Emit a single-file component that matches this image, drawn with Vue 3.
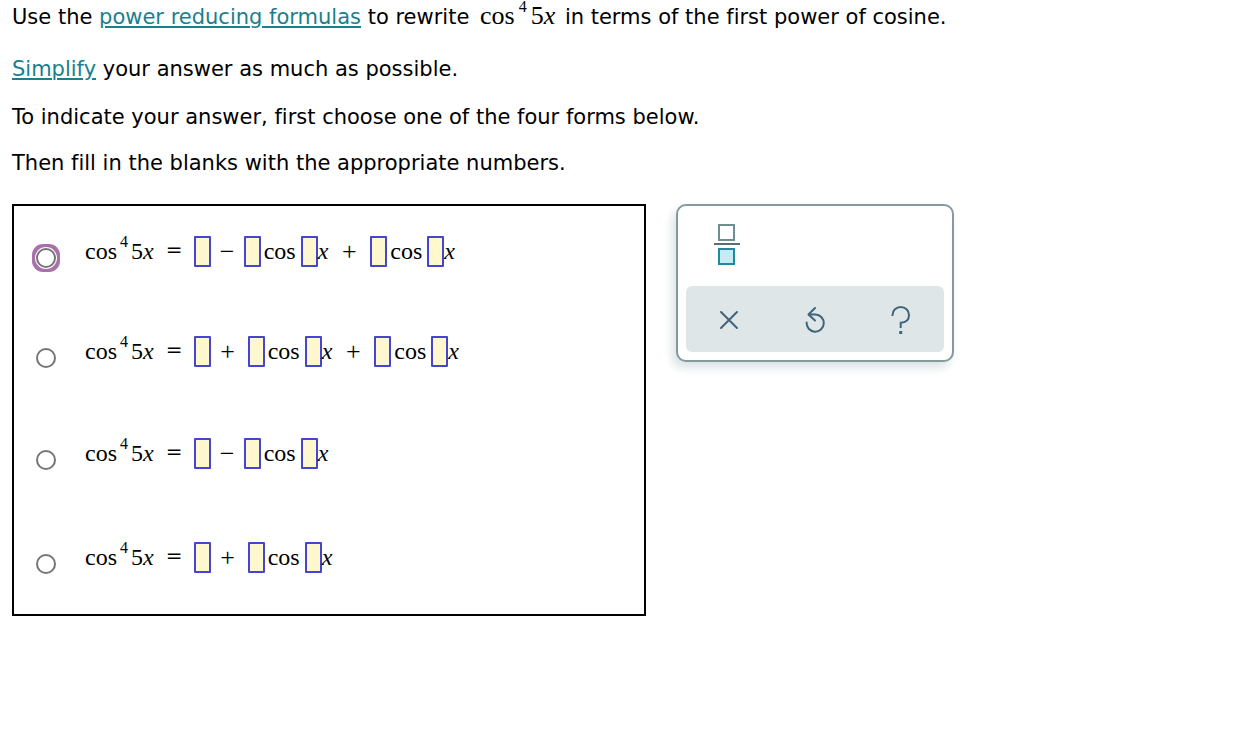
<script setup>
import { ref } from 'vue'

const selected = ref(null)
const focused = ref(0)

const blank = { kind: 'blank' }
const cosTerm = [blank, { kind: 'cos' }, blank, { kind: 'x' }]
const op = (kind, text) => ({ kind, text })

const forms = [
  [blank, op('minus', '−'), ...cosTerm, op('plus', '+'), ...cosTerm],
  [blank, op('plus', '+'), ...cosTerm, op('plus', '+'), ...cosTerm],
  [blank, op('minus', '−'), ...cosTerm],
  [blank, op('plus', '+'), ...cosTerm]
]
</script>

<template>
  <main class="page">
    <section class="prompt">
      <p class="first">
        Use the <a href="#power">power reducing formulas</a> to rewrite
        <span class="expr">cos<sup>4</sup>5<i>x</i></span> in terms of the first power of cosine.
      </p>
      <p class="second"><a href="#simplify">Simplify</a> your answer as much as possible.</p>
      <p class="third">To indicate your answer, first choose one of the four forms below.</p>
      <p class="fourth">Then fill in the blanks with the appropriate numbers.</p>
    </section>

    <div class="work">
      <section class="forms">
        <div v-for="(form, i) in forms" :key="i" class="form">
          <span class="radio" :class="{ ring: focused === i }">
            <input
              :id="`form-${i}`"
              v-model="selected"
              type="radio"
              name="form"
              :value="i"
              @focus="focused = i"
            />
          </span>
          <div class="equation">
            <label :for="`form-${i}`" class="lhs">cos<sup>4</sup>5<i>x</i></label>
            <span class="equals">=</span>
            <template v-for="(part, j) in form" :key="j">
              <input
                v-if="part.kind === 'blank'"
                class="blank"
                type="text"
                :aria-label="`Form ${i + 1}, blank ${j + 1}`"
              />
              <span v-else-if="part.kind === 'cos'" class="cos">cos</span>
              <i v-else-if="part.kind === 'x'" class="var">x</i>
              <span v-else class="op" :class="part.kind">{{ part.text }}</span>
            </template>
          </div>
        </div>
      </section>

      <aside class="palette">
        <button class="fraction" type="button" aria-label="Fraction">
          <svg width="26" height="42" viewBox="0 0 26 42" fill="none">
            <rect x="5" y="1" width="15" height="15" stroke="#6f8d93" stroke-width="2" />
            <path d="M0 20H26" stroke="#5c6f70" stroke-width="2" />
            <rect x="5" y="25" width="15" height="15" fill="#c8ebf3" stroke="#1f8a9a" stroke-width="2" />
          </svg>
        </button>
        <div class="toolbar">
          <button type="button" aria-label="Clear">
            <svg width="28" height="32" viewBox="0 0 28 32" fill="none" stroke="#3f6579" stroke-width="2" stroke-linecap="round">
              <path d="M6 9L22 25M22 9L6 25" />
            </svg>
          </button>
          <button type="button" aria-label="Undo">
            <svg width="28" height="32" viewBox="0 0 28 32" fill="none" stroke="#3f6579" stroke-width="2" stroke-linecap="round" stroke-linejoin="round">
              <path d="M14 5L7.5 11.5L14 17.5" />
              <path d="M8 11.5H14.5A8.6 8.6 0 1 1 5.6 19.5" />
            </svg>
          </button>
          <button type="button" aria-label="Help">
            <svg width="28" height="32" viewBox="0 0 28 32" fill="none" stroke="#3f6579" stroke-width="2">
              <path d="M5.5 13V12A8.2 8 0 0 1 22 12C22 17.5 19 19.5 13.7 19.8V25" />
              <path d="M13.7 28V31" stroke-width="3" />
            </svg>
          </button>
        </div>
      </aside>
    </div>
  </main>
</template>

<style>
body {
  background: #fff;
}
</style>

<style scoped>
.page {
  padding: 1px 12px 24px;
  color: #000;
  font-family: Verdana, "DejaVu Sans", sans-serif;
  font-size: 21px;
  font-variant-ligatures: none;
}

.prompt p {
  margin: 0;
  line-height: 32px;
}

.prompt .second {
  margin-top: 20px;
}

.prompt .third {
  margin-top: 16px;
}

.prompt .fourth {
  margin-top: 14px;
}

a {
  color: #1b7f8e;
  text-decoration-thickness: 2px;
  text-underline-offset: 2px;
}

.expr,
.equation {
  font-family: "Liberation Serif", "Times New Roman", serif;
}

.expr {
  margin: 0 3px 0 4px;
  font-size: 26px;
  line-height: 1;
}

sup {
  margin: 0 3px;
  font-size: 16px;
  line-height: 0;
  vertical-align: 12px;
}

.expr sup {
  margin: 0 4px;
}

.work {
  display: grid;
  grid-template-columns: minmax(0, 634px) minmax(0, 278px);
  align-items: start;
  gap: 30px;
  margin-top: 25px;
}

.forms {
  display: grid;
  grid-template-rows: 100px 102px 104px auto;
  padding: 30px 18px 36px;
  border: 2px solid #000;
}

.form {
  display: flex;
  align-items: flex-start;
  gap: 25px;
}

.radio {
  display: grid;
  place-items: center;
  width: 28px;
  height: 28px;
  margin-top: 8px;
  border-radius: 11px;
}

.radio.ring {
  background: #a971a9;
}

.radio input {
  appearance: none;
  width: 20px;
  height: 20px;
  margin: 0;
  border: 2px solid #767676;
  border-radius: 50%;
  outline: none;
  background: #fff;
  box-shadow: 0 0 0 1px #fff;
}

.radio input:checked {
  background: radial-gradient(circle, #1b7f8e 5px, #fff 6px);
}

.equation {
  display: flex;
  align-items: center;
  height: 31px;
  font-size: 24px;
  line-height: 31px;
}

.equals {
  width: 17px;
  margin: 0 11px 0 12px;
  font-family: "DejaVu Sans", sans-serif;
  font-size: 20px;
  line-height: 26px;
  height: 31px;
  text-align: center;
}

.blank {
  box-sizing: border-box;
  width: 17px;
  height: 31px;
  padding: 0;
  border: 2px solid #4545d2;
  border-radius: 1px;
  outline: none;
  background: #fff8cf;
  font: inherit;
  font-size: 16px;
  text-align: center;
}

.cos {
  margin: 0 5px 0 3px;
}

.op {
  font-size: 26px;
  text-align: center;
}

.minus {
  width: 33px;
}

.plus {
  width: 37px;
  padding-right: 3px;
  box-sizing: border-box;
}

.var + .plus {
  width: 42px;
  padding-right: 0;
}

.palette {
  padding: 18px 8px 8px;
  border: 2px solid #86999d;
  border-radius: 10px;
  background: #fff;
  box-shadow: -4px 6px 10px #dce4e6;
}

.palette button {
  padding: 0;
  border: 0;
  background: none;
  cursor: pointer;
}

.palette svg {
  display: block;
}

.palette .fraction {
  display: block;
  margin: 0 0 20px 28px;
}

.toolbar {
  display: grid;
  grid-template-columns: repeat(3, 1fr);
  height: 66px;
  border-radius: 6px;
  background: #dfe6e8;
}

.toolbar button {
  display: grid;
  place-items: center;
}
</style>
